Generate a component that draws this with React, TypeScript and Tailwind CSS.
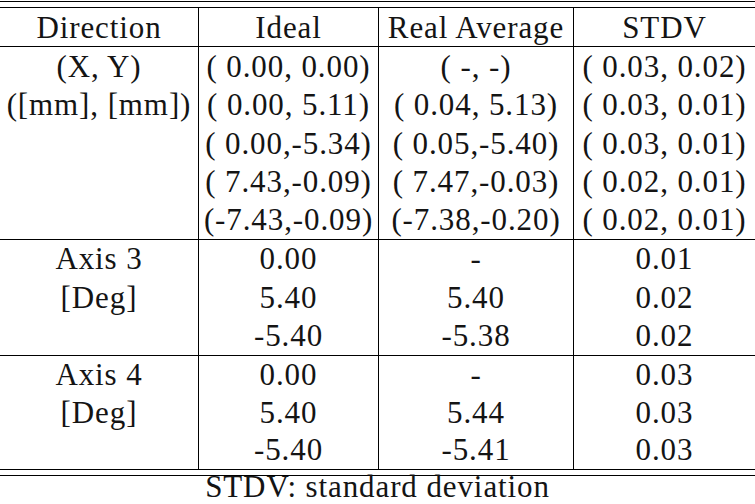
import React from "react";

const font = { fontFamily: '"Liberation Serif", "Times New Roman", serif' };

type Col = string[];

function Cell({ text, h }: { text: string; h: string }) {
  return (
    <div className={`${h} flex items-center justify-center whitespace-pre leading-none tracking-[0.9px]`}>
      {text}
    </div>
  );
}

function Section({ cols, h = "h-[38.3px]" }: { cols: Col[]; h?: string }) {
  const widths = ["w-[198px]", "w-[180px]", "w-[195px]", "flex-1"];
  return (
    <div className="flex">
      {cols.map((c, i) => (
        <div
          key={i}
          className={`${widths[i]} flex flex-col ${i > 0 ? "border-l border-black" : ""}`}
        >
          {c.map((t, j) => (
            <Cell key={j} text={t} h={h} />
          ))}
        </div>
      ))}
    </div>
  );
}

function Rule() {
  return <div className="h-px bg-black w-full" />;
}

export default function App() {
  return (
    <div
      className="w-[755px] h-[504px] overflow-hidden bg-white text-[31px] text-[#141414]"
      style={font}
    >
      <div className="pt-[1px]">
        <Rule />
        <div className="h-[5px]" />
        <Rule />
        <Section cols={[["Direction"], ["Ideal"], ["Real Average"], ["STDV"]]} />
        <Rule />
        <Section
          cols={[
            ["(X, Y)", "([mm], [mm])", "", "", ""],
            ["( 0.00, 0.00)", "( 0.00, 5.11)", "( 0.00,-5.34)", "( 7.43,-0.09)", "(-7.43,-0.09)"],
            ["( -, -)", "( 0.04, 5.13)", "( 0.05,-5.40)", "( 7.47,-0.03)", "(-7.38,-0.20)"],
            ["( 0.03, 0.02)", "( 0.03, 0.01)", "( 0.03, 0.01)", "( 0.02, 0.01)", "( 0.02, 0.01)"],
          ]}
        />
        <Rule />
        <Section
          cols={[
            ["Axis 3", "[Deg]", ""],
            ["0.00", "5.40", "-5.40"],
            ["-", "5.40", "-5.38"],
            ["0.01", "0.02", "0.02"],
          ]}
        />
        <Rule />
        <Section
          h="h-[37.7px]"
          cols={[
            ["Axis 4", "[Deg]", ""],
            ["0.00", "5.40", "-5.40"],
            ["-", "5.44", "-5.41"],
            ["0.03", "0.03", "0.03"],
          ]}
        />
        <Rule />
        <div className="h-[5px]" />
        <Rule />
        <div className="text-center leading-[22px] tracking-[0.9px]">STDV: standard deviation</div>
      </div>
    </div>
  );
}
